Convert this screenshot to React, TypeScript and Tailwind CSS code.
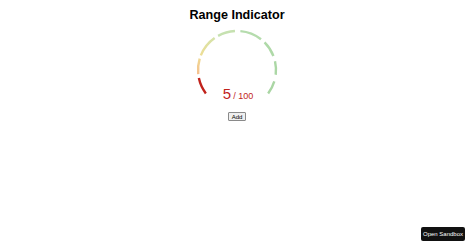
import React from 'react';

type Segment = {
  color: string;
  from: number;
  to: number;
};

const CENTER_X = 40;
const CENTER_Y = 42;
const RADIUS = 39;

// angles in degrees, clockwise from the right, y pointing down
const segments: Segment[] = [
  { color: '#c1231c', from: 143, to: 168 },
  { color: 'url(#warm)', from: 174, to: 197 },
  { color: 'url(#mid)', from: 202, to: 235 },
  { color: '#c6e1b0', from: 241, to: 267 },
  { color: '#b5dcad', from: 275, to: 308 },
  { color: '#afd9a8', from: 315, to: 339 },
  { color: '#abd7a5', from: 347, to: 367 },
  { color: '#aad6a4', from: 377, to: 397 }
];

function point(angle: number): string {
  const radians = (angle * Math.PI) / 180;
  const x = CENTER_X + RADIUS * Math.cos(radians);
  const y = CENTER_Y + RADIUS * Math.sin(radians);

  return `${x.toFixed(2)} ${y.toFixed(2)}`;
}

function arcPath(segment: Segment): string {
  const large = segment.to - segment.from > 180 ? 1 : 0;

  return `M ${point(segment.from)} A ${RADIUS} ${RADIUS} 0 ${large} 1 ${point(segment.to)}`;
}

function Gauge({ value, max }: { value: number; max: number }) {
  return (
    <div className="relative mt-[5px] h-[70px] w-[80px]">
      <svg className="block overflow-visible" height="70" viewBox="0 0 80 70" width="80">
        <defs>
          <linearGradient id="warm" x1="0" x2="0" y1="1" y2="0">
            <stop offset="0%" stopColor="#f5c08f" />
            <stop offset="100%" stopColor="#f0d892" />
          </linearGradient>
          <linearGradient id="mid" x1="0" x2="1" y1="1" y2="0">
            <stop offset="0%" stopColor="#eddd95" />
            <stop offset="100%" stopColor="#d4e3aa" />
          </linearGradient>
        </defs>
        {segments.map((segment) => (
          <path d={arcPath(segment)} fill="none" key={segment.from} stroke={segment.color} strokeWidth="2.4" />
        ))}
      </svg>
      <div className="absolute left-0 right-0 top-[58px] flex items-baseline justify-center pl-[2px] leading-none text-[#c1231c]">
        <span className="text-[15px]">{value}</span>
        <span className="ml-[2px] text-[9px]">/ {max}</span>
      </div>
    </div>
  );
}

export default function App() {
  return (
    <div className="relative flex min-h-[248px] flex-col items-center bg-white font-['Liberation_Sans',Arial,sans-serif] text-black">
      <h1 className="mt-[8px] text-[12.6px] font-bold leading-[15px]">Range Indicator</h1>

      <Gauge max={100} value={5} />

      <button
        className="mt-[14px] flex h-[9px] items-center rounded-[1px] border border-[#8a8a8a] bg-[#efefef] px-[3px] text-[6px] leading-none text-black"
        type="button"
      >
        Add
      </button>

      <button
        className="fixed bottom-[7px] right-[9px] flex h-[14px] w-[44px] items-center justify-center rounded-[2px] bg-[#111111] text-[6px] leading-none text-white"
        type="button"
      >
        Open Sandbox
      </button>
    </div>
  );
}
